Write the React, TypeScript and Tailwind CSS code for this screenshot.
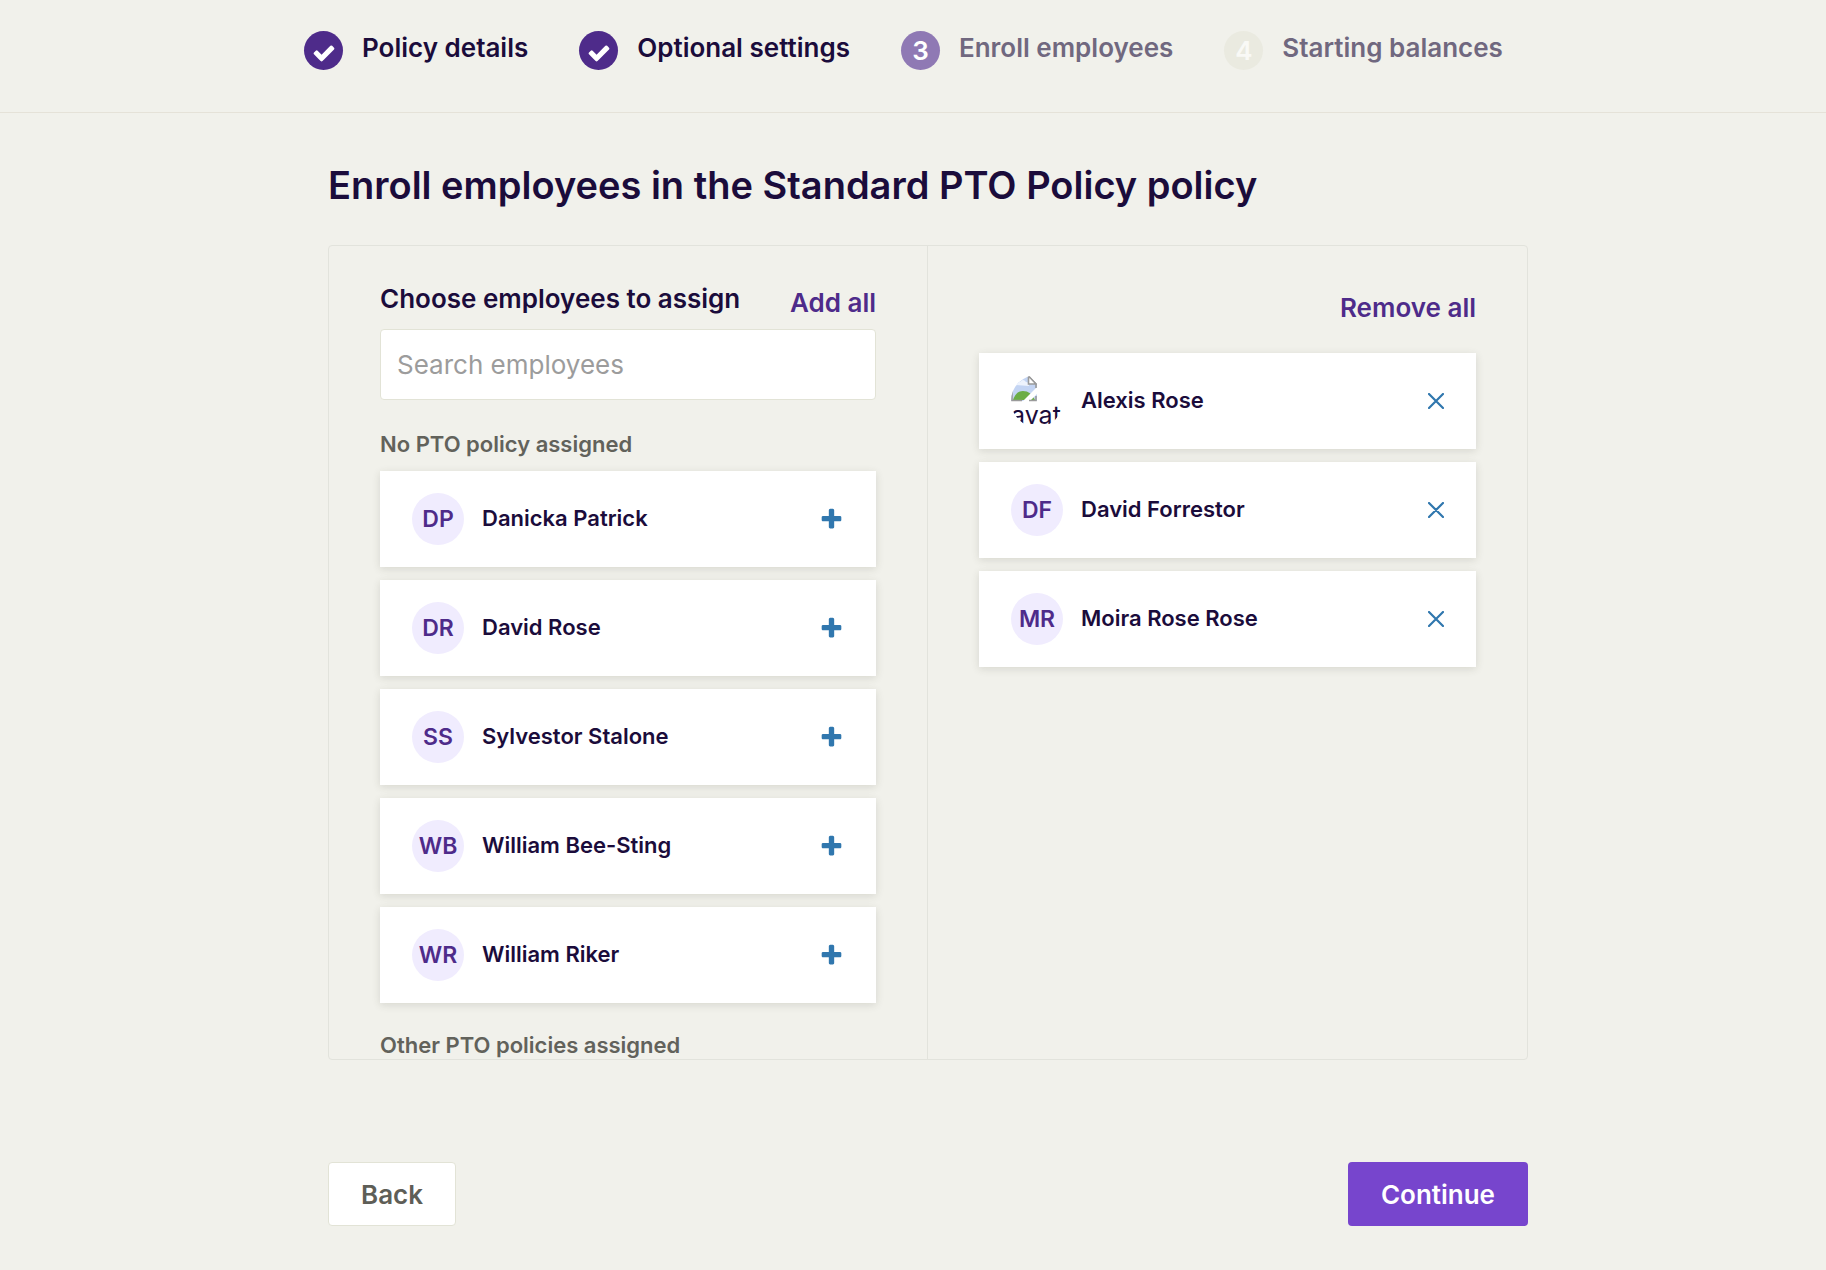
import { useState } from "react";
import type { ReactNode } from "react";

type StepState = "done" | "current" | "upcoming";

const steps: { label: string; state: StepState }[] = [
  { label: "Policy details", state: "done" },
  { label: "Optional settings", state: "done" },
  { label: "Enroll employees", state: "current" },
  { label: "Starting balances", state: "upcoming" },
];

const available = [
  { name: "Danicka Patrick", initials: "DP" },
  { name: "David Rose", initials: "DR" },
  { name: "Sylvestor Stalone", initials: "SS" },
  { name: "William Bee-Sting", initials: "WB" },
  { name: "William Riker", initials: "WR" },
];

const enrolled = [
  { name: "Alexis Rose", initials: "" },
  { name: "David Forrestor", initials: "DF" },
  { name: "Moira Rose Rose", initials: "MR" },
];

const badgeStyles: Record<StepState, string> = {
  done: "bg-[#4e2b8a] text-white",
  current: "bg-[#8f79b4] text-white",
  upcoming: "bg-[#eaeae0] text-[#f9f9f6]",
};

function CheckIcon() {
  return (
    <svg viewBox="0 0 1792 1792" className="mt-1 size-6" fill="currentColor" aria-hidden="true">
      <path d="M1671 566q0 40-28 68l-724 724-136 136q-28 28-68 28t-68-28l-136-136-362-362q-28-28-28-68t28-68l136-136q28-28 68-28t68 28l294 295 656-657q28-28 68-28t68 28l136 136q28 28 28 68z" />
    </svg>
  );
}

function PlusIcon() {
  return (
    <svg viewBox="0 0 1792 1792" className="size-[25px]" fill="currentColor" aria-hidden="true">
      <path d="M1600 736v192q0 40-28 68t-68 28h-416v416q0 40-28 68t-68 28h-192q-40 0-68-28t-28-68v-416h-416q-40 0-68-28t-28-68v-192q0-40 28-68t68-28h416v-416q0-40 28-68t68-28h192q40 0 68 28t28 68v416h416q40 0 68 28t28 68z" />
    </svg>
  );
}

function CloseIcon() {
  return (
    <svg viewBox="0 0 16 16" className="size-4" fill="none" stroke="currentColor" strokeWidth="2.2" strokeLinecap="round" aria-hidden="true">
      <path d="M1 1l14 14M15 1L1 15" />
    </svg>
  );
}

function MissingPhoto() {
  return (
    <span className="block size-[52px] shrink-0 overflow-hidden rounded-full text-[25px] leading-[26px] text-[#1b0c3b]">
      <svg viewBox="0 0 26 27" className="h-[27px] w-[26px]" aria-hidden="true">
        <path d="M0 1h18l8 8v17H0z" fill="#c3d4f3" />
        <path d="M4 10q1-4 5-3 3-4 6 0 3 0 3 4z" fill="#eef3fd" />
        <path d="M2 25q3-9 10-9 8 0 12 9z" fill="#6bad46" />
        <path d="M26 12L11 27h7l8-8z" fill="#fff" />
        <path d="M1 1v24.5h10M18 25.5h7V21M25 13V9l-8-8" fill="none" stroke="#9a9a9a" strokeWidth="1.6" />
        <path d="M17.500 1v8H25z" fill="#fff" stroke="#9a9a9a" strokeWidth="1.600" />
      </svg>
      <span className="block">avatar</span>
    </span>
  );
}

function EmployeeCard({ name, initials, action, icon }: { name: string; initials: string; action: string; icon: ReactNode }) {
  return (
    <li className="flex h-24 items-center bg-white px-8 shadow-[0_2px_8px_rgba(60,60,40,0.14)]">
      {initials ? (
        <span className="flex size-[52px] shrink-0 items-center justify-center rounded-full bg-[#f0ecfe] text-[23px] font-semibold text-[#4e2b8a]">
          {initials}
        </span>
      ) : (
        <MissingPhoto />
      )}
      <span className="ml-[18px] grow pb-0.5 text-[22px] leading-8 font-semibold">{name}</span>
      <button type="button" aria-label={`${action} ${name}`} className="text-[#3077ae]">
        {icon}
      </button>
    </li>
  );
}

export default function App() {
  const [query, setQuery] = useState("");

  return (
    <div className="min-h-screen bg-[#f1f1eb] font-['Inter',sans-serif] text-[#1b0c3b]">
      <header className="border-b border-[#e5e2d8] pl-[30px]">
        <ol className="mx-auto flex h-28 max-w-[1248px] gap-[51px] pt-[31px]">
          {steps.map((step, i) => (
            <li key={step.label} className="flex gap-[19px]">
              <span className={`flex size-[39px] shrink-0 items-center justify-center rounded-full text-[26px] font-semibold ${badgeStyles[step.state]}`}>
                {step.state === "done" ? <CheckIcon /> : i + 1}
              </span>
              <span className={`text-[26px] leading-[34px] font-semibold whitespace-nowrap ${step.state === "done" ? "" : "text-[#70687f]"}`}>
                {step.label}
              </span>
            </li>
          ))}
        </ol>
      </header>

      <main className="pl-[30px]">
        <div className="mx-auto max-w-[1200px]">
          <h1 className="pt-12 text-[38px] leading-[48px] font-semibold">Enroll employees in the Standard PTO Policy policy</h1>

          <div className="mt-9 grid h-[815px] grid-cols-2 overflow-hidden rounded border border-[#e2e3dc]">
            <section className="overflow-hidden border-r border-[#e2e3dc] px-[51px] pt-[35px]">
              <div className="flex items-start justify-between">
                <label htmlFor="employee-search" className="text-[26px] leading-9 font-semibold">
                  Choose employees to assign
                </label>
                <button type="button" className="pt-1 text-[26px] leading-9 font-semibold text-[#4e2b8a]">
                  Add all
                </button>
              </div>
              <input
                id="employee-search"
                type="text"
                value={query}
                onChange={(e) => setQuery(e.target.value)}
                placeholder="Search employees"
                className="mt-2 h-[71px] w-full rounded border border-[#e2e3d6] bg-white px-4 text-[26px] outline-none placeholder:text-[#9c9c9c]"
              />
              <h2 className="mt-7 text-[22px] leading-8 font-semibold text-[#62625b]">No PTO policy assigned</h2>
              <ul className="mt-[11px] flex flex-col gap-[13px]">
                {available.map((e) => (
                  <EmployeeCard key={e.name} {...e} action="Add" icon={<PlusIcon />} />
                ))}
              </ul>
              <h2 className="mt-[26px] text-[22px] leading-8 font-semibold text-[#62625b]">Other PTO policies assigned</h2>
            </section>

            <section className="px-[51px] pt-11">
              <div className="flex justify-end">
                <button type="button" className="text-[26px] leading-9 font-semibold text-[#4e2b8a]">
                  Remove all
                </button>
              </div>
              <ul className="mt-[27px] flex flex-col gap-[13px]">
                {enrolled.map((e) => (
                  <EmployeeCard key={e.name} {...e} action="Remove" icon={<CloseIcon />} />
                ))}
              </ul>
            </section>
          </div>

          <div className="mt-[102px] flex justify-between pb-11 text-[26px] font-semibold">
            <button type="button" className="h-16 rounded border border-[#e2e3d6] bg-white px-8 text-[#5e5e57]">
              Back
            </button>
            <button type="button" className="h-16 rounded bg-[#7745cd] px-[33px] text-white">
              Continue
            </button>
          </div>
        </div>
      </main>
    </div>
  );
}
